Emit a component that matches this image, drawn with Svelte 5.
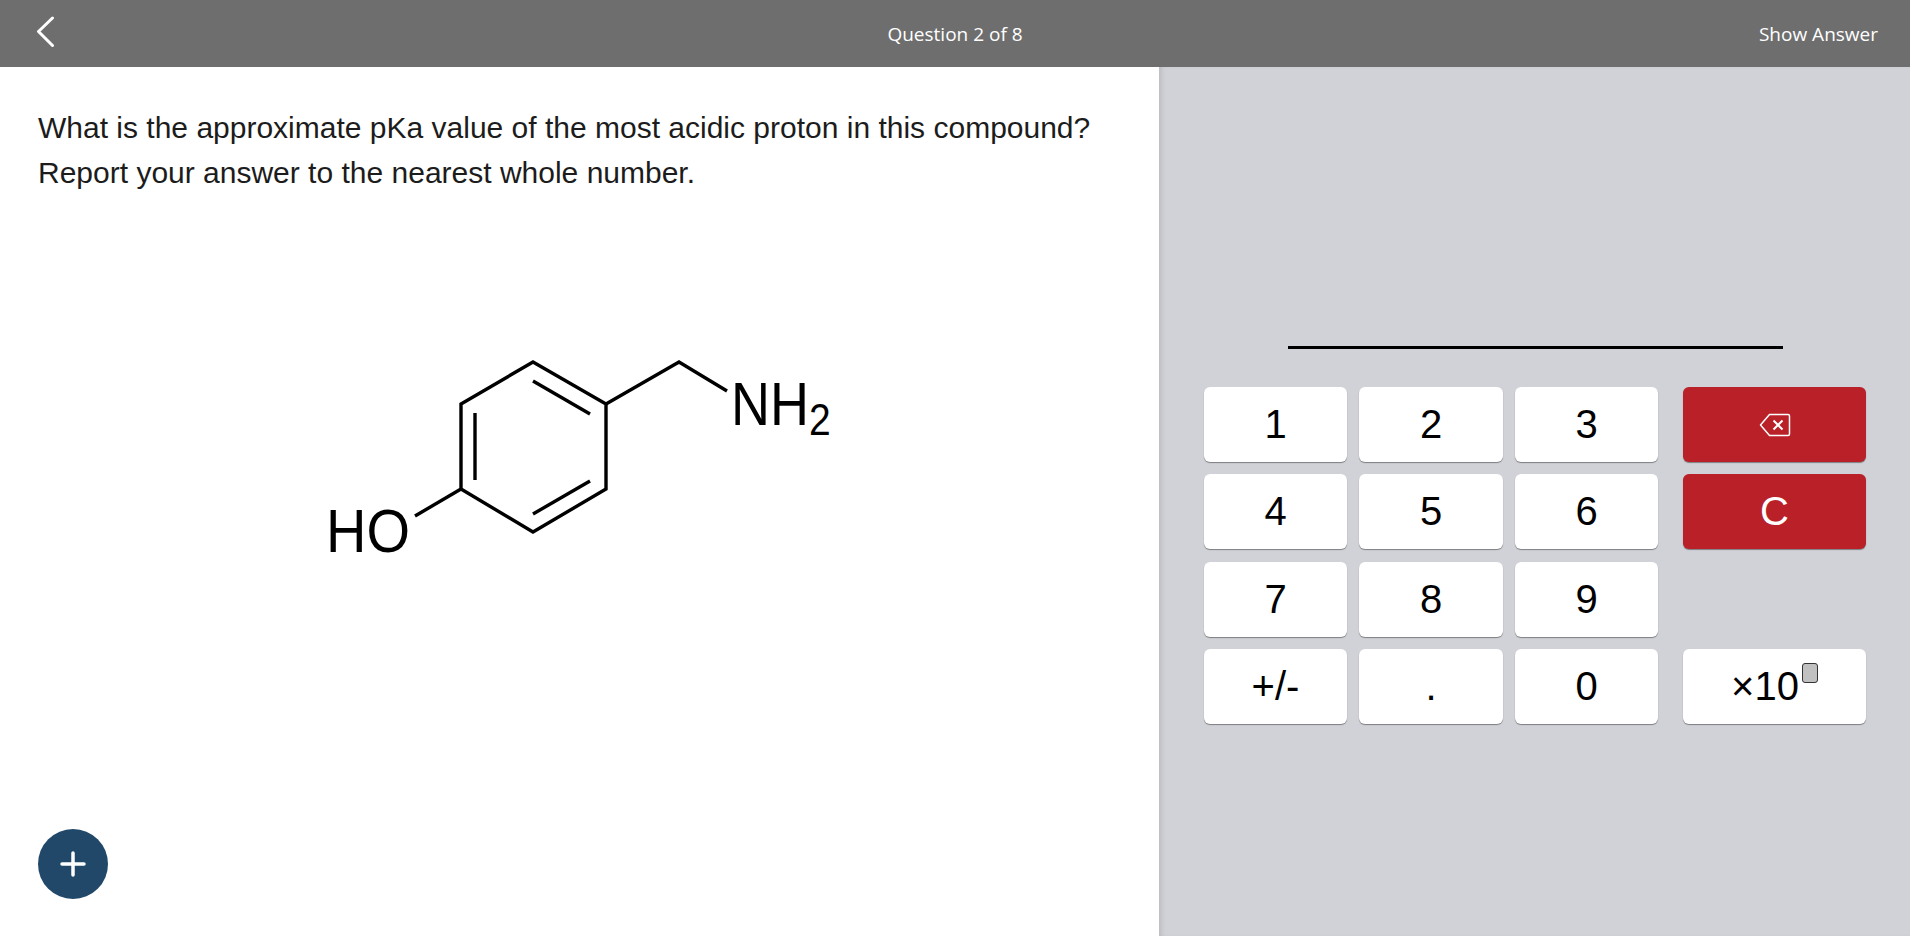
<script>
  const digits = ["1", "2", "3", "4", "5", "6", "7", "8", "9", "+/-", ".", "0"];
</script>

<div class="page">
  <header class="topbar">
    <button class="back" aria-label="Back">
      <svg width="20" height="32" viewBox="0 0 20 32" fill="none" stroke="#fff" stroke-width="3" stroke-linecap="round" stroke-linejoin="round">
        <polyline points="16.5,2 2.5,15.5 16.5,29.5" />
      </svg>
    </button>
    <div class="title">Question 2 of 8</div>
    <div class="show">Show Answer</div>
  </header>

  <main class="body">
    <section class="question">
      <p>What is the approximate pKa value of the most acidic proton in this compound?<br />Report your answer to the nearest whole number.</p>

      <svg class="molecule" width="560" height="220" viewBox="300 340 560 220" fill="none" stroke="#000" stroke-width="3.4">
        <polygon points="533,362 606,404 606,489 533,532 461,489 461,404" stroke-linejoin="miter" />
        <line x1="533" y1="381" x2="590" y2="414" />
        <line x1="475" y1="413" x2="475" y2="480" />
        <line x1="590" y1="481" x2="533" y2="514" />
        <polyline points="606,404 679,362 727,391" />
        <line x1="461" y1="489" x2="415" y2="516" />
        <text class="atom" transform="translate(731 425) scale(1 1.13)">NH<tspan class="sub" dy="9">2</tspan></text>
        <text class="atom ho" transform="translate(326 552) scale(1 1.08)">HO</text>
      </svg>

      <button class="fab" aria-label="Add">
        <svg width="26" height="26" viewBox="0 0 26 26" stroke="#fff" stroke-width="3.5" stroke-linecap="round">
          <line x1="13" y1="2" x2="13" y2="24" />
          <line x1="2" y1="13" x2="24" y2="13" />
        </svg>
      </button>
    </section>

    <section class="pad">
      <div class="readout"></div>
      <div class="keys">
        <div class="numbers">
          {#each digits as d}
            <button class="key">{d}</button>
          {/each}
        </div>
        <div class="side">
          <button class="key danger" aria-label="Backspace">
            <svg width="32" height="24" viewBox="0 0 32 24" fill="none" stroke="#fff" stroke-width="1.5" stroke-linejoin="round">
              <path d="M10.5 1.5H29a1.5 1.5 0 0 1 1.5 1.5V21a1.5 1.5 0 0 1-1.5 1.5H10.5L1.5 12Z" />
              <path d="M14.5 7.5l9 9M23.5 7.5l-9 9" stroke-width="2" />
            </svg>
          </button>
          <button class="key danger">C</button>
          <div class="spacer"></div>
          <button class="key exp">×10<span class="slot"></span></button>
        </div>
      </div>
    </section>
  </main>
</div>

<style>
  :global(body) {
    margin: 0;
    font-family: "Liberation Sans", Arial, sans-serif;
    background: #fff;
  }

  button {
    font: inherit;
    border: none;
    padding: 0;
    cursor: pointer;
  }

  .page {
    height: 936px;
    display: flex;
    flex-direction: column;
    overflow: hidden;
  }

  .topbar {
    height: 67px;
    flex: none;
    display: grid;
    grid-template-columns: 1fr auto 1fr;
    align-items: center;
    padding: 0 32px 0 36px;
    background: #6e6e6e;
    color: #fff;
    font-family: "Open Sans", sans-serif;
    font-size: 19px;
  }

  .back {
    justify-self: start;
    display: flex;
    background: none;
    margin-top: -4px;
  }

  .title {
    padding-right: 4px;
    margin-top: 1px;
  }

  .show {
    justify-self: end;
    margin-top: 1px;
  }

  .body {
    flex: 1;
    display: flex;
    min-height: 0;
  }

  .question {
    width: 1159px;
    flex: none;
    box-sizing: border-box;
    padding: 38px 0 0 38px;
    position: relative;
  }

  .question p {
    margin: 0;
    font-size: 30px;
    line-height: 45px;
    color: #1c1c1c;
  }

  .molecule {
    display: block;
    margin: 145px 0 0 262px;
    overflow: visible;
  }

  .atom {
    fill: #000;
    stroke: none;
    font-size: 54px;
    font-family: "Liberation Sans", Arial, sans-serif;
  }

  .ho {
    font-size: 56px;
  }

  .sub {
    font-size: 39px;
  }

  .fab {
    position: absolute;
    left: 38px;
    bottom: 37px;
    width: 70px;
    height: 70px;
    border-radius: 50%;
    background: #214868;
    display: flex;
    align-items: center;
    justify-content: center;
  }

  .pad {
    flex: 1;
    background: #d1d2d7;
    box-shadow: inset 5px 0 5px -3px rgba(0, 0, 0, 0.12);
    padding: 279px 44px 0 45px;
  }

  .readout {
    height: 3px;
    width: 495px;
    margin-left: 84px;
    background: #000;
  }

  .keys {
    display: flex;
    gap: 25px;
    margin-top: 38px;
  }

  .numbers {
    display: grid;
    grid-template-columns: 143px 144px 143px;
    grid-auto-rows: 75px;
    gap: 12.4px 12px;
  }

  .side {
    width: 183px;
    display: grid;
    grid-auto-rows: 75px;
    gap: 12.4px;
  }

  .key {
    display: flex;
    align-items: center;
    justify-content: center;
    background: #fff;
    color: #000;
    font-size: 40px;
    border-radius: 6px;
    box-shadow: 0 1px 1px 0 rgba(0, 0, 0, 0.4);
  }

  .danger {
    background: #b92028;
    color: #fff;
  }

  .slot {
    width: 16px;
    height: 20px;
    box-sizing: border-box;
    align-self: flex-start;
    margin: 14px 0 0 3px;
    background: #c0c0c0;
    border: 1px solid #333;
    border-radius: 3px;
  }
</style>
